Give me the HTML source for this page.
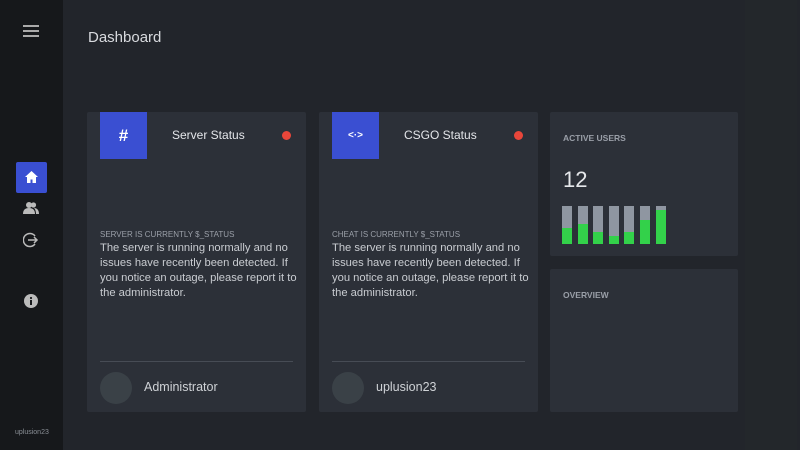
<!DOCTYPE html>
<html><head><style>
*{margin:0;padding:0;box-sizing:border-box}
body{width:800px;height:450px;background:#22252b;font-family:"Liberation Sans",sans-serif;position:relative;overflow:hidden;color:#d6d8dc}
.side{position:absolute;left:0;top:0;width:63px;height:450px;background:#16181b}
.rstrip{position:absolute;left:745px;top:0;width:52px;height:450px;background:#23272b}
.card{position:absolute;background:#2c3038;border-radius:2px}
.sq{position:absolute;left:13px;top:0;width:47px;height:47px;background:#3a4fd2;color:#fff;display:flex;align-items:center;justify-content:center;font-weight:bold}
.title{position:absolute;left:85px;top:16px;font-size:12px;color:#e4e6ea}
.dot{position:absolute;right:15px;top:19px;width:9px;height:9px;border-radius:50%;background:#e8463a}
.lab{position:absolute;left:13px;top:118px;font-size:8px;color:#9a9fa8}
.txt{position:absolute;left:13px;top:129px;width:205px;font-size:11.2px;line-height:15px;color:#c9ccd1}
.hr{position:absolute;left:13px;right:13px;top:249px;height:1px;background:#474c55}
.av{position:absolute;left:13px;top:260px;width:32px;height:32px;border-radius:50%;background:#3a4147}
.nm{position:absolute;left:57px;top:268px;font-size:12.5px;color:#cfd2d6}
.h6{position:absolute;left:13px;font-size:8.5px;color:#9a9fa8;font-weight:bold}
.bar{position:absolute;top:206px;width:10px;height:38px;background:#8f96a1}
.bar i{position:absolute;left:0;right:0;bottom:0;background:#33d14a}
</style></head><body>
<div class="side">
<div style="position:absolute;left:23px;top:25px;width:16px;height:2px;background:#aaa;box-shadow:0 5px 0 #aaa,0 10px 0 #aaa"></div>
<div style="position:absolute;left:16px;top:162px;width:31px;height:31px;background:#3a4fd2;border-radius:2px"></div>
<svg style="position:absolute;left:25px;top:171px" width="13" height="12" viewBox="0 0 13 12"><path d="M6.5 0L0 6h2v6h3.5V8.5h2V12H11V6h2z" fill="#fff"/></svg>
<svg style="position:absolute;left:23px;top:201px" width="16" height="14" viewBox="0 0 16 14"><circle cx="6" cy="4" r="3" fill="#bbb"/><path d="M0 13c0-4 2-6 6-6s6 2 6 6z" fill="#bbb"/><circle cx="10.5" cy="4" r="2.6" fill="#bbb"/><path d="M11 7c3 0 5 2 5 6h-3c0-3-1-5-2-6z" fill="#bbb"/></svg>
<svg style="position:absolute;left:23px;top:232px" width="16" height="16" viewBox="0 0 16 16"><path d="M12 4A6.5 6.5 0 1 0 12 12" fill="none" stroke="#bbb" stroke-width="1.5"/><path d="M5 8h9M11 5l3 3-3 3" fill="none" stroke="#bbb" stroke-width="1.5"/></svg>
<svg style="position:absolute;left:24px;top:294px" width="14" height="14" viewBox="0 0 14 14"><circle cx="7" cy="7" r="7" fill="#bbb"/><rect x="6" y="6" width="2" height="5" fill="#16181b"/><circle cx="7" cy="4" r="1.1" fill="#16181b"/></svg>
<div style="position:absolute;left:15px;top:429px;font-size:7px;color:#8a8f96">uplusion23</div>
</div>
<div class="rstrip"></div>
<div style="position:absolute;left:88px;top:29px;font-size:15px;color:#d8dade">Dashboard</div>

<div class="card" style="left:87px;top:112px;width:219px;height:300px">
<div class="sq" style="font-size:17px">#</div>
<div class="title">Server Status</div><div class="dot"></div>
<div class="lab">SERVER IS CURRENTLY $_STATUS</div>
<div class="txt">The server is running normally and no issues have recently been detected. If you notice an outage, please report it to the administrator.</div>
<div class="hr"></div><div class="av"></div><div class="nm">Administrator</div>
</div>

<div class="card" style="left:319px;top:112px;width:219px;height:300px">
<div class="sq" style="font-size:10px">&lt;·&gt;</div>
<div class="title">CSGO Status</div><div class="dot"></div>
<div class="lab">CHEAT IS CURRENTLY $_STATUS</div>
<div class="txt">The server is running normally and no issues have recently been detected. If you notice an outage, please report it to the administrator.</div>
<div class="hr"></div><div class="av"></div><div class="nm">uplusion23</div>
</div>

<div class="card" style="left:550px;top:112px;width:188px;height:144px">
<div class="h6" style="top:21px">ACTIVE USERS</div>
<div style="position:absolute;left:13px;top:55px;font-size:22px;color:#e6e8eb">12</div>
</div>
<div class="bar" style="left:562px"><i style="height:16px"></i></div>
<div class="bar" style="left:578px"><i style="height:20px"></i></div>
<div class="bar" style="left:593px"><i style="height:12px"></i></div>
<div class="bar" style="left:609px"><i style="height:8px"></i></div>
<div class="bar" style="left:624px"><i style="height:12px"></i></div>
<div class="bar" style="left:640px"><i style="height:24px"></i></div>
<div class="bar" style="left:656px"><i style="height:34px"></i></div>

<div class="card" style="left:550px;top:269px;width:188px;height:143px">
<div class="h6" style="top:21px">OVERVIEW</div>
</div>
</body></html>
